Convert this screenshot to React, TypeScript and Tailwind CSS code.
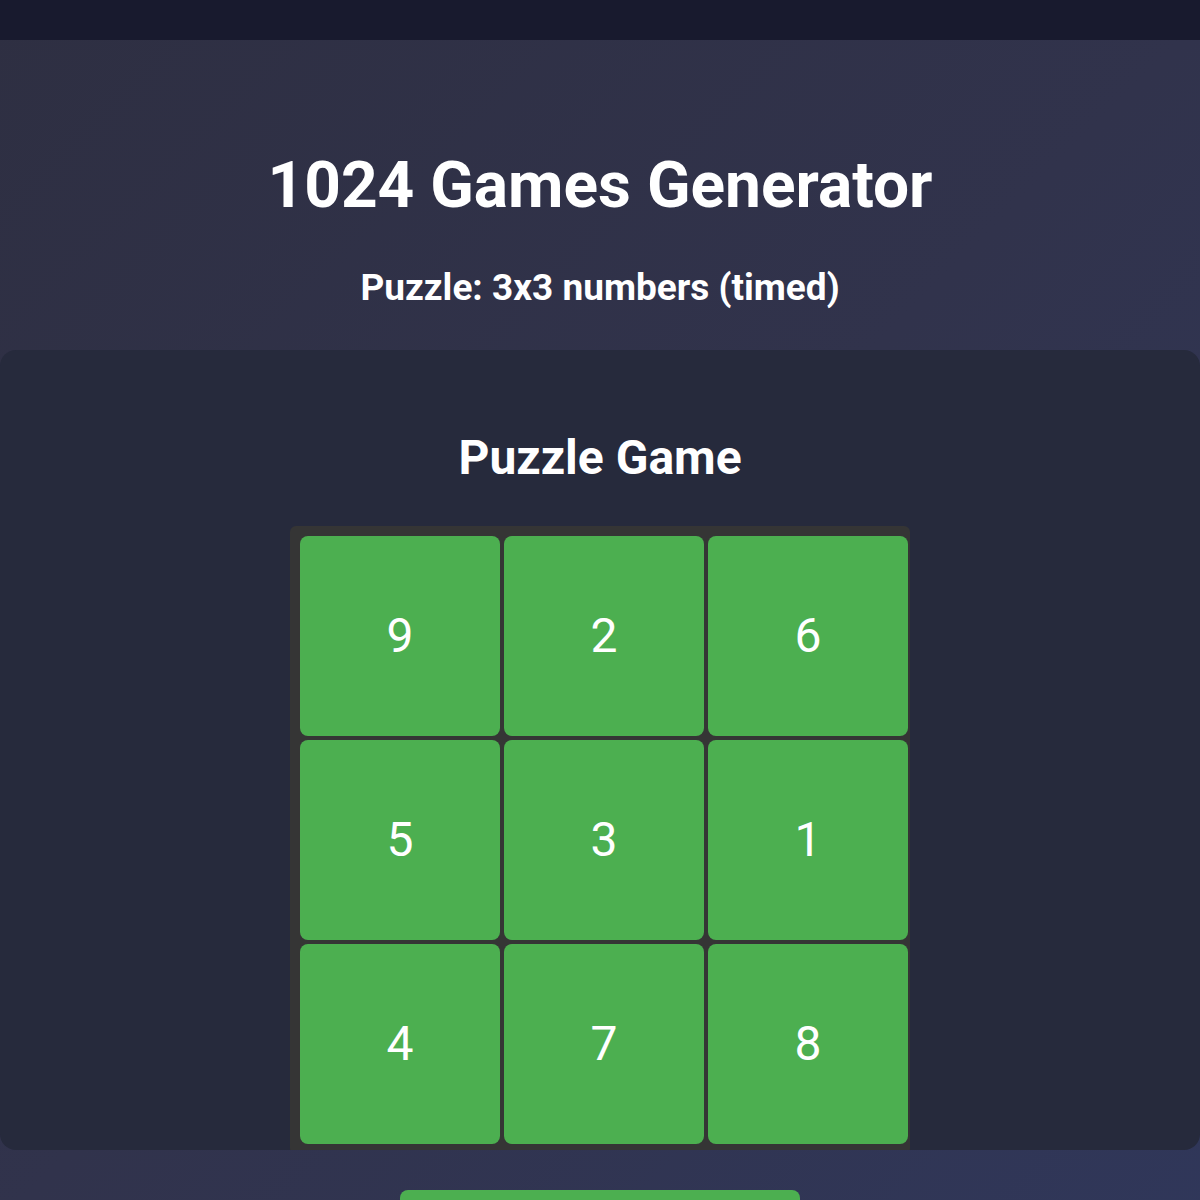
import React from "react";

const tiles = [9, 2, 6, 5, 3, 1, 4, 7, 8];

export default function App() {
  return (
    <div
      className="min-h-[1200px] w-full bg-[linear-gradient(135deg,#2e2f42_0%,#31334c_50%,#30375a_100%)] text-white"
      style={{ fontFamily: "Roboto, 'Noto Sans', sans-serif" }}
    >
      <div className="h-10 w-full bg-[#181a2e]" />
      <div className="flex flex-col items-center">
        <h1 className="mt-[111px] text-[64px] font-bold leading-[70px]">1024 Games Generator</h1>
        <p className="mt-[47px] text-[37px] font-bold leading-[40px]">Puzzle: 3x3 numbers (timed)</p>
        <div className="mt-[42px] flex h-[800px] w-full flex-col items-center overflow-hidden rounded-[16px] bg-[#262a3c]">
          <h2 className="mt-[82px] text-[48px] font-bold leading-[52px]">Puzzle Game</h2>
          <div className="mt-[42px] grid w-[620px] grid-cols-[200px_200px_200px] gap-[4px] rounded-[6px] bg-[#353535] py-[10px] pl-[10px] pr-[2px]">
            {tiles.map((n) => (
              <div
                key={n}
                className="flex h-[200px] w-[200px] items-center justify-center rounded-[8px] bg-[#4caf50] text-[48px] font-normal"
              >
                {n}
              </div>
            ))}
          </div>
        </div>
        <button className="mt-[40px] h-[60px] w-[400px] rounded-[8px] bg-[#4caf50]" />
      </div>
    </div>
  );
}
